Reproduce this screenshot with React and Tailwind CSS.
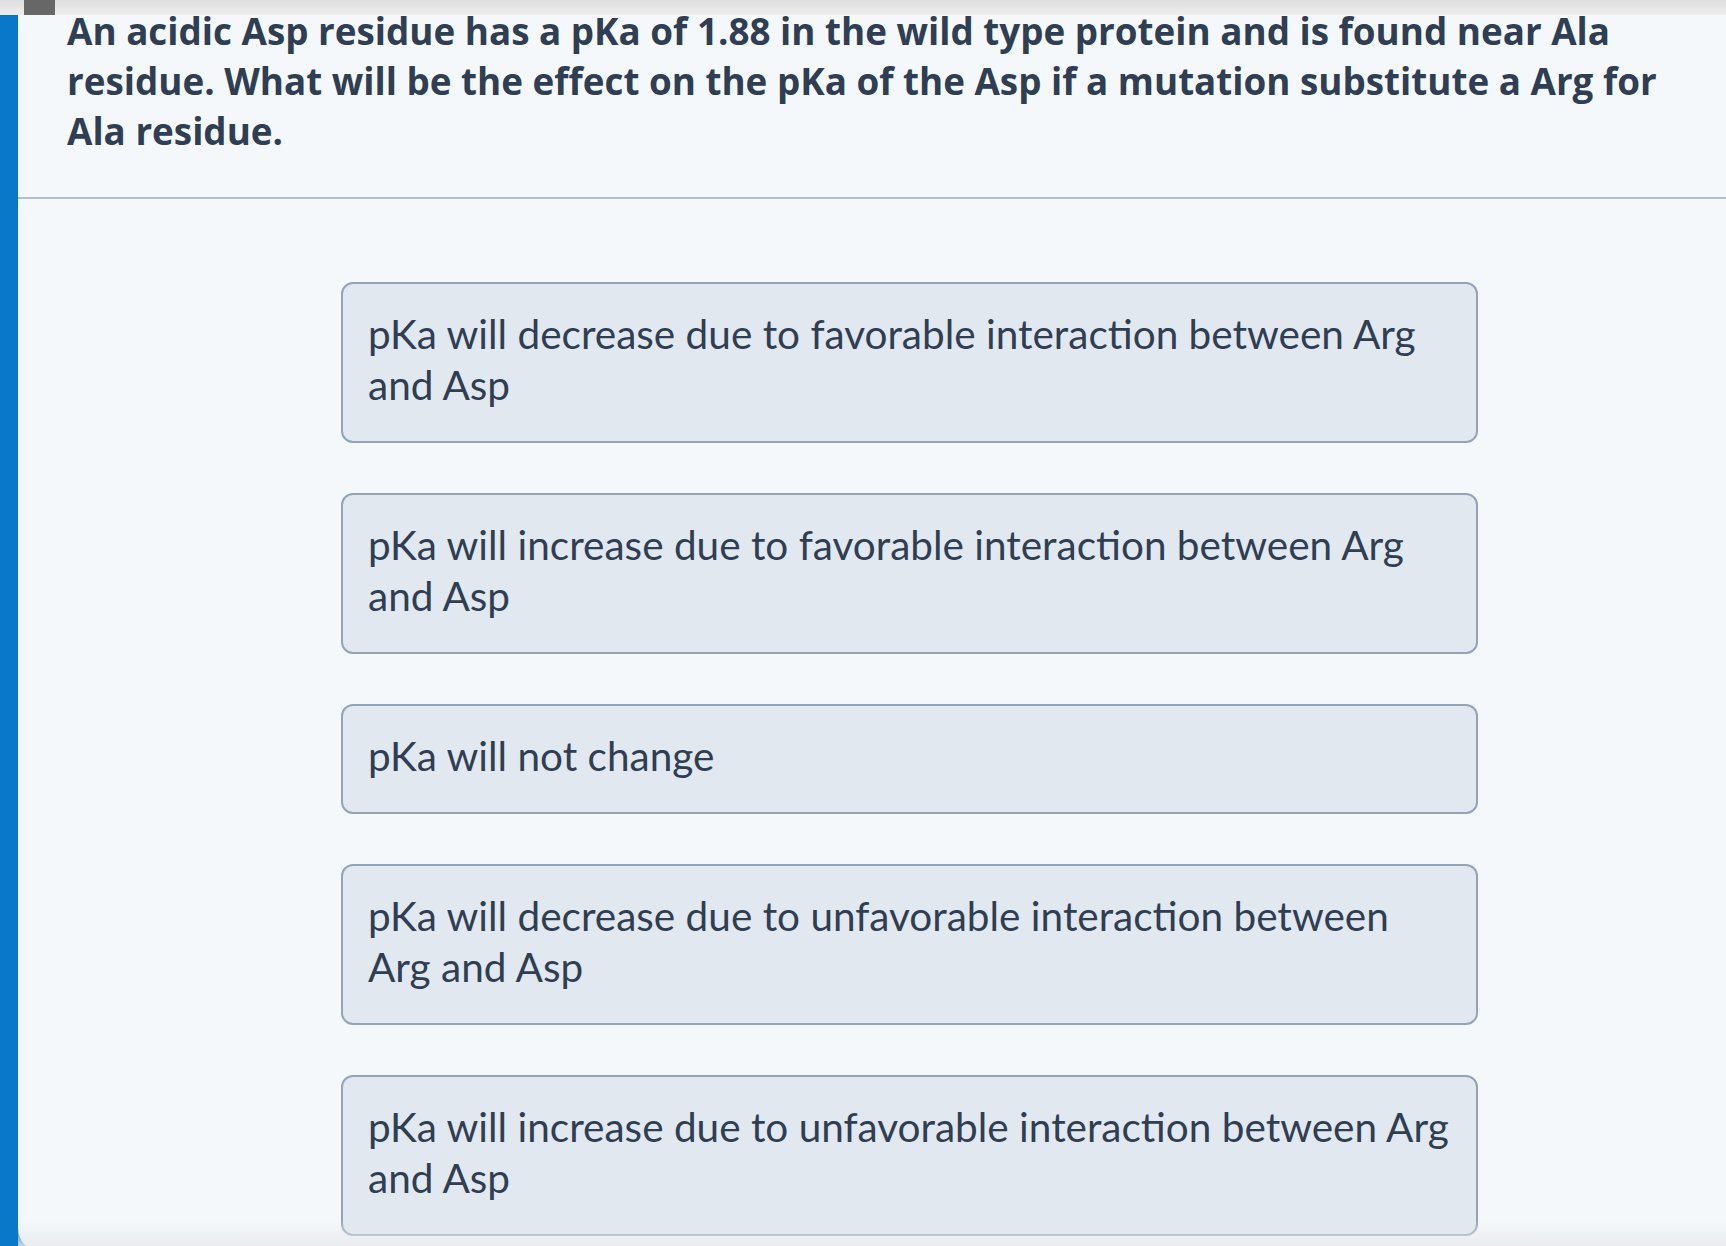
import React from 'react';

const options = [
  'pKa will decrease due to favorable interaction between Arg and Asp',
  'pKa will increase due to favorable interaction between Arg and Asp',
  'pKa will not change',
  'pKa will decrease due to unfavorable interaction between Arg and Asp',
  'pKa will increase due to unfavorable interaction between Arg and Asp',
];

const Option = ({ text }) => (
  <button
    type="button"
    className="w-[1137px] rounded-xl border-2 border-[#93a3b8] bg-[#e2e8f0] pl-[25px] pr-[20px] pt-[24px] pb-[31px] text-left text-[40.5px] leading-[51px] text-[#2f3e52]"
    style={{ fontFamily: 'Lato, "Open Sans", sans-serif' }}
  >
    {text}
  </button>
);

export default function App() {
  return (
    <div className="relative h-[1246px] w-full overflow-hidden bg-[#0a78c8]">
      <div className="relative ml-[18px] min-h-[1252px] rounded-bl-[24px] bg-[#f5f8fb]">
        <div className="border-b-2 border-[#b4c0cd] px-[49px] pt-[6px] pb-[41px]">
          <p
            className="text-[36.8px] leading-[50px] font-bold text-[#2f3e52]"
            style={{ fontFamily: '"Open Sans", "Noto Sans", sans-serif' }}
          >
            An acidic Asp residue has a pKa of 1.88 in the wild type protein and is found near Ala residue. What will be the effect on the pKa of the Asp if a mutation substitute a Arg for Ala residue.
          </p>
        </div>

        <div className="flex flex-col items-start gap-[50px] pl-[323px] pt-[83px] pb-[16px]">
          {options.map((o) => (
            <Option key={o} text={o} />
          ))}
        </div>

        <div className="pointer-events-none absolute bottom-0 left-0 right-0 h-[32px] bg-gradient-to-b from-transparent to-[#e7e9ec]" />
      </div>

      <div className="pointer-events-none absolute left-0 right-0 top-0 h-[15px] bg-gradient-to-b from-[#dedede] to-[#eeeeee]">
        <div className="ml-[24px] h-[15px] w-[31px] bg-[#676767]" />
      </div>
    </div>
  );
}
